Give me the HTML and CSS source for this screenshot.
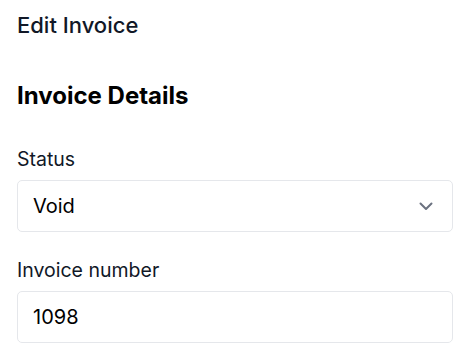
FILE: index.html
```html
<!DOCTYPE html>
<html>
<head>
<meta charset="utf-8">
<link rel="stylesheet" href="styles.css">
</head>
<body>
<div class="page">
  <h1 class="page-title">Edit Invoice</h1>
  <h2 class="section-title">Invoice Details</h2>
  <div class="field">
    <label class="field-label">Status</label>
    <div class="select">
      <span class="select-value">Void</span>
      <svg class="chevron" width="14" height="9" viewBox="0 0 14 9"><path d="M1.5 1.5 L7 7 L12.5 1.5" fill="none" stroke="#6b7280" stroke-width="2" stroke-linecap="round" stroke-linejoin="round"/></svg>
    </div>
  </div>
  <div class="field">
    <label class="field-label">Invoice number</label>
    <div class="input">1098</div>
  </div>
</div>
</body>
</html>
```
FILE: styles.css
```css
* { box-sizing: border-box; }
html, body { margin: 0; padding: 0; background: #fff; }
body {
  font-family: Inter, "Liberation Sans", sans-serif;
  color: #111827;
}
.page {
  padding: 10px 21px 0 17px;
}
.page-title {
  margin: 0;
  font-size: 22px;
  font-weight: 500;
  line-height: 30px;
}
.section-title {
  margin: 40px 0 0;
  font-size: 24px;
  font-weight: 700;
  line-height: 32px;
  color: #000;
}
.field {
  margin-top: 35px;
}
.field + .field { margin-top: 26px; }
.field-label {
  display: block;
  font-size: 19.5px;
  line-height: 24px;
  margin-bottom: 9px;
}
.select, .input {
  height: 52px;
  border: 1px solid #e5e7eb;
  border-radius: 5px;
  display: flex;
  align-items: center;
  padding: 0 19px 0 15px;
  font-size: 20px;
  color: #000;
}
.select { justify-content: space-between; }
.chevron { display: block; }
```
